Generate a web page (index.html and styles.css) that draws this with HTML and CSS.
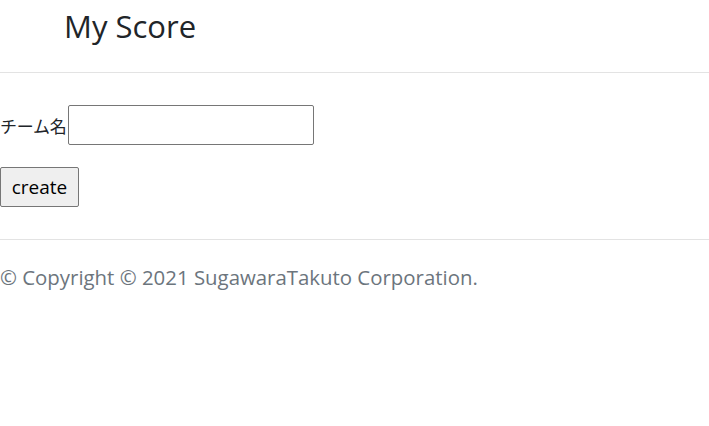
FILE: index.html
```html
<!DOCTYPE html>
<html lang="ja">
<head>
<meta charset="utf-8">
<title>My Score</title>
<link rel="stylesheet" href="styles.css">
</head>
<body>
<header class="site-header">
  <h1 class="brand">My Score</h1>
</header>
<main class="main">
  <form class="team-form">
    <div class="field">
      <label class="field-label" for="team">チーム名</label><input class="field-input" id="team" type="text">
    </div>
    <button class="btn" type="button">create</button>
  </form>
</main>
<footer class="site-footer">
  <p class="copyright">© Copyright © 2021 SugawaraTakuto Corporation.</p>
</footer>
</body>
</html>
```

FILE: styles.css
```css
html, body {
  margin: 0;
  padding: 0;
  background: #fff;
}
body {
  font-family: "Open Sans", "Noto Sans CJK JP", sans-serif;
  color: #212529;
}
.site-header {
  height: 73px;
  border-bottom: 1px solid #e3e3e3;
  box-sizing: border-box;
  padding-left: 64px;
}
.brand {
  margin: 0;
  font-weight: 400;
  font-size: 31px;
  line-height: 53px;
}
.main {
  padding: 32px 0 32px;
  border-bottom: 1px solid #e3e3e3;
}
.team-form {
  margin: 0;
  display: flex;
  flex-direction: column;
  align-items: flex-start;
  gap: 22px;
}
.field {
  display: flex;
  align-items: center;
  height: 40px;
}
.field-label {
  font-family: "Noto Sans CJK JP", sans-serif;
  font-size: 17px;
  letter-spacing: -0.25px;
  color: #212529;
}
.field-input {
  width: 246px;
  height: 40px;
  box-sizing: border-box;
  border: 1px solid #767676;
  border-radius: 2px;
  padding: 0 4px;
  font-size: 18px;
  margin: 0 0 0 1px;
}
.btn {
  height: 40px;
  width: 79px;
  box-sizing: border-box;
  border: 1px solid #767676;
  border-radius: 2px;
  background: #efefef;
  font-family: "Open Sans", sans-serif;
  font-size: 19px;
  color: #000;
  padding: 0;
  margin: 0;
}
.site-footer {
  padding-top: 23px;
}
.copyright {
  margin: 0;
  font-size: 20.4px;
  color: #6c757d;
  line-height: 28px;
}
```
